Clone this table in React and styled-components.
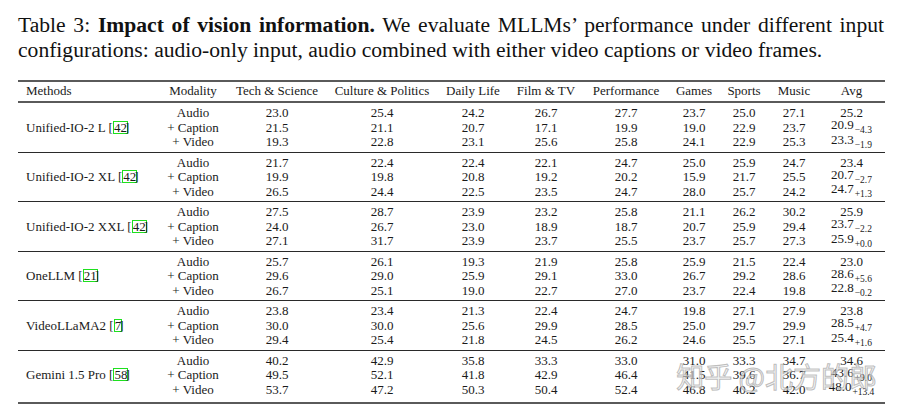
import React from 'react';
import styled, { createGlobalStyle } from 'styled-components';

const GlobalStyle = createGlobalStyle`
    html, body {
        margin: 0;
        padding: 0;
        background: #fff;
    }
    body {
        font-family: 'Liberation Serif', 'Times New Roman', serif;
        color: #1c1c1c;
    }
`;

const COLS = '142px 66px 102px 108px 74px 72px 88px 48px 52px 48px 67px';

const headers = ['Methods', 'Modality', 'Tech & Science', 'Culture & Politics', 'Daily Life', 'Film & TV', 'Performance', 'Games', 'Sports', 'Music', 'Avg'];

// each row: modality, 8 category scores, avg, delta
const groups = [
    {
        name: 'Unified-IO-2 L',
        cite: '42',
        rows: [
            ['Audio', '23.0', '25.4', '24.2', '26.7', '27.7', '23.7', '25.0', '27.1', '25.2'],
            ['+ Caption', '21.5', '21.1', '20.7', '17.1', '19.9', '19.0', '22.9', '23.7', '20.9', '−4.3'],
            ['+ Video', '19.3', '22.8', '23.1', '25.6', '25.8', '24.1', '22.9', '25.3', '23.3', '−1.9'],
        ],
    },
    {
        name: 'Unified-IO-2 XL',
        cite: '42',
        rows: [
            ['Audio', '21.7', '22.4', '22.4', '22.1', '24.7', '25.0', '25.9', '24.7', '23.4'],
            ['+ Caption', '19.9', '19.8', '20.8', '19.2', '20.2', '15.9', '21.7', '25.5', '20.7', '−2.7'],
            ['+ Video', '26.5', '24.4', '22.5', '23.5', '24.7', '28.0', '25.7', '24.2', '24.7', '+1.3'],
        ],
    },
    {
        name: 'Unified-IO-2 XXL',
        cite: '42',
        rows: [
            ['Audio', '27.5', '28.7', '23.9', '23.2', '25.8', '21.1', '26.2', '30.2', '25.9'],
            ['+ Caption', '24.0', '26.7', '23.0', '18.9', '18.7', '20.7', '25.9', '29.4', '23.7', '−2.2'],
            ['+ Video', '27.1', '31.7', '23.9', '23.7', '25.5', '23.7', '25.7', '27.3', '25.9', '+0.0'],
        ],
    },
    {
        name: 'OneLLM',
        cite: '21',
        rows: [
            ['Audio', '25.7', '26.1', '19.3', '21.9', '25.8', '25.9', '21.5', '22.4', '23.0'],
            ['+ Caption', '29.6', '29.0', '25.9', '29.1', '33.0', '26.7', '29.2', '28.6', '28.6', '+5.6'],
            ['+ Video', '26.7', '25.1', '19.0', '22.7', '27.0', '23.7', '22.4', '19.8', '22.8', '−0.2'],
        ],
    },
    {
        name: 'VideoLLaMA2',
        cite: '7',
        rows: [
            ['Audio', '23.8', '23.4', '21.3', '22.4', '24.7', '19.8', '27.1', '27.9', '23.8'],
            ['+ Caption', '30.0', '30.0', '25.6', '29.9', '28.5', '25.0', '29.7', '29.9', '28.5', '+4.7'],
            ['+ Video', '29.4', '25.4', '21.8', '24.5', '26.2', '24.6', '25.5', '27.1', '25.4', '+1.6'],
        ],
    },
    {
        name: 'Gemini 1.5 Pro',
        cite: '58',
        rows: [
            ['Audio', '40.2', '42.9', '35.8', '33.3', '33.0', '31.0', '33.3', '34.7', '34.6'],
            ['+ Caption', '49.5', '52.1', '41.8', '42.9', '46.4', '41.5', '39.6', '36.7', '43.6', '+9.0'],
            ['+ Video', '53.7', '47.2', '50.3', '50.4', '52.4', '46.8', '40.2', '42.0', '48.0', '+13.4'],
        ],
    },
];

const App = () => {
    return (
        <Page>
            <GlobalStyle />
            <Caption>
                <CaptionLine $justify>
                    Table 3: <b>Impact of vision information.</b> We evaluate MLLMs’ performance under different input
                </CaptionLine>
                <CaptionLine>
                    configurations: audio-only input, audio combined with either video captions or video frames.
                </CaptionLine>
            </Caption>

            <Table>
                <HeaderRow>
                    {headers.map((h, i) => (
                        <Cell key={h} $left={i === 0}>
                            {h}
                        </Cell>
                    ))}
                </HeaderRow>

                {groups.map((g, gi) => (
                    <Group key={g.name} $last={gi === groups.length - 1}>
                        <MethodCell>
                            {g.name} [<Cite>{g.cite}</Cite>]
                        </MethodCell>
                        {g.rows.map((row) => (
                            <React.Fragment key={row[0]}>
                                {row.slice(0, 9).map((v, ci) => (
                                    <Cell key={ci} style={{ gridColumn: ci + 2 }}>
                                        {v}
                                    </Cell>
                                ))}
                                <Cell style={{ gridColumn: 11 }}>
                                    {row[9]}
                                    {row[10] && <Delta>{row[10]}</Delta>}
                                </Cell>
                            </React.Fragment>
                        ))}
                    </Group>
                ))}

                <Watermark>知乎 @北方的郎</Watermark>
            </Table>
        </Page>
    );
};

export default App;

const Page = styled.div`
    width: 898px;
    height: 412px;
    padding: 13px 0 0 18px;
    box-sizing: border-box;
    overflow: hidden;
`;

const Caption = styled.div`
    width: 866px;
    font-size: 21.6px;
    line-height: 24.5px;
    color: #111;
    b {
        font-weight: bold;
    }
`;

const CaptionLine = styled.div`
    text-align: ${(props) => (props.$justify ? 'justify' : 'left')};
    text-align-last: ${(props) => (props.$justify ? 'justify' : 'left')};
    white-space: ${(props) => (props.$justify ? 'normal' : 'nowrap')};
`;

const Table = styled.div`
    position: relative;
    width: 867px;
    margin-top: 18px;
    border-top: 2px solid #5a5a5a;
    border-bottom: 2px solid #5a5a5a;
    font-size: 13px;
    color: #1a1a1a;
`;

const HeaderRow = styled.div`
    display: grid;
    grid-template-columns: ${COLS};
    height: 19px;
    align-items: center;
    border-bottom: 2px solid #5a5a5a;
`;

const Group = styled.div`
    display: grid;
    grid-template-columns: ${COLS};
    grid-template-rows: repeat(3, 14.5px);
    align-items: center;
    padding: 3px 0 ${(props) => (props.$last ? '5px' : '2px')};
    border-bottom: ${(props) => (props.$last ? 'none' : '1px solid #2a2a2a')};
`;

const Cell = styled.div`
    white-space: nowrap;
    text-align: ${(props) => (props.$left ? 'left' : 'center')};
    padding-left: ${(props) => (props.$left ? '8px' : '0')};
    line-height: 14.5px;
`;

const MethodCell = styled.div`
    grid-column: 1;
    grid-row: 1 / 4;
    padding-left: 8px;
    white-space: nowrap;
`;

const Cite = styled.span`
    display: inline-block;
    outline: 1.5px solid #1ee01e;
    outline-offset: -1px;
    padding: 0 1px;
    line-height: 13px;
    margin-right: -3px;
`;

const Delta = styled.span`
    font-size: 9.5px;
    vertical-align: -4px;
    margin-left: 1px;
`;

const Watermark = styled.div`
    position: absolute;
    right: 8px;
    bottom: 10px;
    font-family: 'Noto Sans CJK SC', sans-serif;
    font-size: 28px;
    line-height: 32px;
    color: rgba(235, 235, 235, 0.6);
    -webkit-text-stroke: 1px rgba(140, 140, 140, 0.55);
    pointer-events: none;
`;
